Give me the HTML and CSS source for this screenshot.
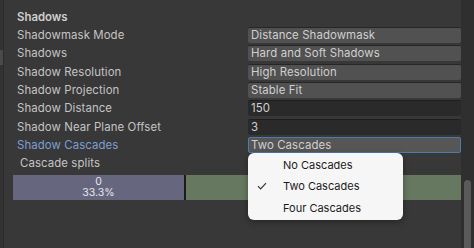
FILE: index.html
```html
<!DOCTYPE html>
<html>
<head>
<meta charset="utf-8">
<link rel="stylesheet" href="styles.css">
</head>
<body>
<div class="window">
  <div class="edge"><div class="edge-mark"></div></div>
  <div class="content">
    <div class="header">Shadows</div>
    <div class="rows">
      <div class="label">Shadowmask Mode</div><div class="field dropdown">Distance Shadowmask</div>
      <div class="label">Shadows</div><div class="field dropdown">Hard and Soft Shadows</div>
      <div class="label">Shadow Resolution</div><div class="field dropdown">High Resolution</div>
      <div class="label">Shadow Projection</div><div class="field dropdown">Stable Fit</div>
      <div class="label">Shadow Distance</div><div class="field text">150</div>
      <div class="label">Shadow Near Plane Offset</div><div class="field text">3</div>
      <div class="label active">Shadow Cascades</div><div class="field dropdown focused">Two Cascades</div>
      <div class="label sub">Cascade splits</div><div></div>
    </div>
    <div class="splits">
      <div class="split first"><span class="num">0</span><span class="pct">33.3%</span></div>
      <div class="divider"></div>
      <div class="split second"></div>
    </div>
  </div>
  <div class="scrollbar"><div class="thumb"></div></div>
  <div class="popup">
    <div class="item"><span class="check"></span>No Cascades</div>
    <div class="item"><span class="check">
      <svg width="10" height="8" viewBox="0 0 10 8"><path d="M1 4.2 L3.6 6.8 L9 1.2" fill="none" stroke="#333" stroke-width="1.2"/></svg>
    </span>Two Cascades</div>
    <div class="item"><span class="check"></span>Four Cascades</div>
  </div>
</div>
</body>
</html>
```

FILE: styles.css
```css
html, body {
  margin: 0;
  padding: 0;
  background: #383838;
}
body {
  font-family: Inter, "Noto Sans", sans-serif;
  font-size: 11.4px;
  color: #c4c4c4;
}
.window {
  position: relative;
  display: flex;
  width: 474px;
  height: 248px;
  overflow: hidden;
}
.edge {
  width: 4px;
  background: #333333;
  border-right: 1px solid #2c2c2c;
  box-sizing: border-box;
}
.edge-mark {
  margin-top: 50px;
  height: 15px;
  width: 3px;
  background: #4a4a4a;
}
.content {
  flex: 1;
  padding: 9px 0 0 13px;
}
.header {
  height: 17px;
  line-height: 17px;
  font-weight: 600;
  color: #d0d0d0;
}
.rows {
  display: grid;
  grid-template-columns: 231px 213px;
  grid-auto-rows: 18.33px;
  align-items: center;
}
.label {
  line-height: 16px;
  white-space: nowrap;
  letter-spacing: 0.1px;
}
.label.active {
  color: #7b9fd2;
}
.label.sub {
  padding-left: 3px;
}
.field {
  height: 16px;
  line-height: 15px;
  box-sizing: border-box;
  padding-left: 3px;
  border-radius: 2px;
  white-space: nowrap;
  color: #cfcfcf;
  letter-spacing: 0.1px;
}
.dropdown {
  background: #515151;
  border-top: 1px solid #262626;
}
.text {
  background: #2a2a2a;
  border-top: 1px solid #1e1e1e;
}
.focused {
  background: #565656;
  border: 1px solid #4c7bad;
  line-height: 14px;
  padding-left: 2px;
}
.splits {
  display: flex;
  margin: 2px 0 0 -4px;
  height: 25px;
  width: 448px;
}
.split {
  height: 25px;
}
.first {
  width: 171px;
  background: #66667e;
  display: flex;
  flex-direction: column;
  align-items: center;
  justify-content: center;
  font-size: 10.5px;
  line-height: 11.5px;
  color: #e6e6ee;
}
.divider {
  width: 2px;
  background: #1c1c1c;
}
.second {
  flex: 1;
  background: #66785f;
}
.scrollbar {
  width: 13px;
  background: #2f2f2f;
  position: relative;
}
.thumb {
  position: absolute;
  left: 3px;
  top: 180px;
  width: 7px;
  height: 80px;
  border-radius: 4px;
  background: #5a5a5a;
}
.popup {
  position: absolute;
  left: 248px;
  top: 153px;
  width: 155px;
  height: 67px;
  box-sizing: border-box;
  padding-top: 1px;
  background: #f6f6f6;
  border-radius: 6px;
  box-shadow: 0 2px 6px rgba(0,0,0,0.35);
}
.item {
  display: flex;
  align-items: center;
  height: 21.5px;
  font-size: 11px;
  color: #1b1b1b;
}
.check {
  width: 35px;
  display: flex;
  justify-content: flex-end;
  padding-right: 16px;
  box-sizing: border-box;
}
```
